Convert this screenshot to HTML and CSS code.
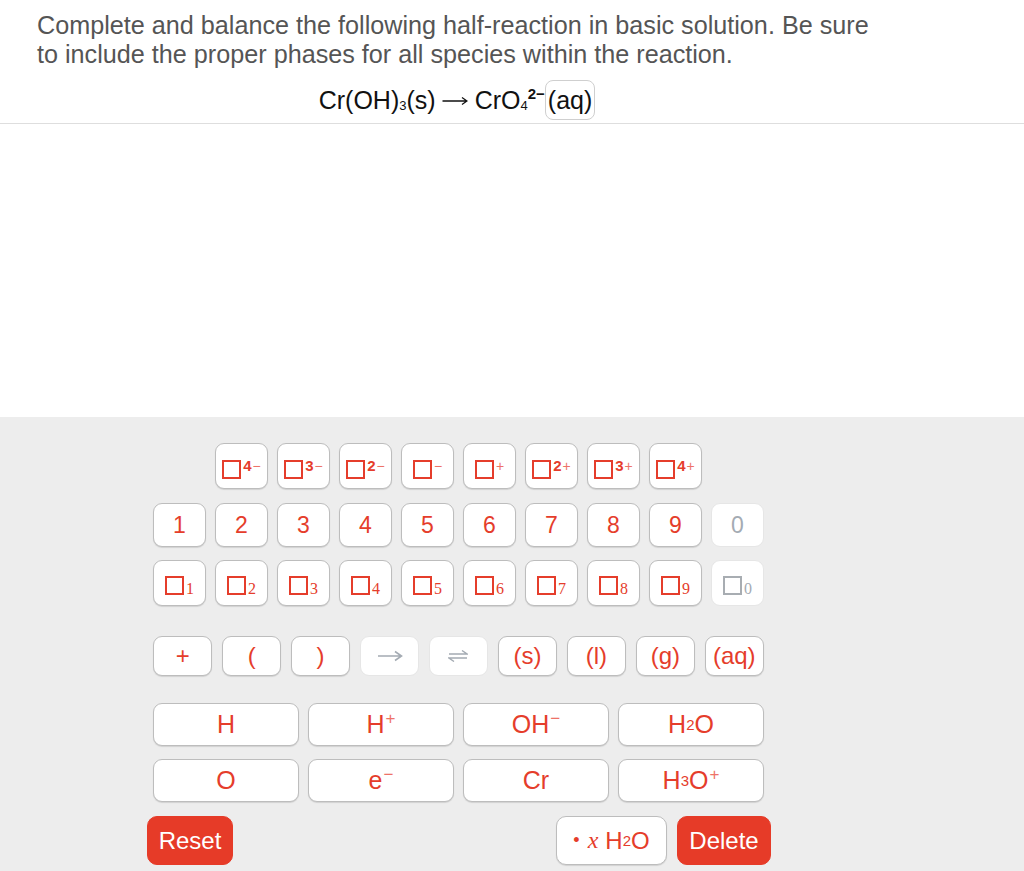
FILE: index.html
```html
<!DOCTYPE html>
<html>
<head>
<meta charset="utf-8">
<link rel="stylesheet" href="styles.css">
</head>
<body>
<div class="question">
  <p class="prompt">Complete and balance the following half-reaction in basic solution. Be sure<br>to include the proper phases for all species within the reaction.</p>
  <div class="equation">Cr(OH)<sub class="eq-sub">3</sub>(s)<svg class="eq-arrow" width="26" height="10" viewBox="0 0 26 10"><path d="M0.5 5H24.5M20 1.5L25 5L20 8.5" fill="none" stroke="#111" stroke-width="1.3"/></svg>CrO<sub class="eq-sub">4</sub><sup class="eq-sup">2−</sup><span class="answer-box">(aq)</span></div>
</div>
<div class="work-area"></div>
<div class="keypad">
  <div class="pad">
    <div class="row charges">
      <button class="key ck first"><span class="box"></span><span class="chg"><b>4</b>−</span></button>
      <button class="key ck"><span class="box"></span><span class="chg"><b>3</b>−</span></button>
      <button class="key ck"><span class="box"></span><span class="chg"><b>2</b>−</span></button>
      <button class="key ck"><span class="box"></span><span class="chg">−</span></button>
      <button class="key ck"><span class="box"></span><span class="chg">+</span></button>
      <button class="key ck"><span class="box"></span><span class="chg"><b>2</b>+</span></button>
      <button class="key ck"><span class="box"></span><span class="chg"><b>3</b>+</span></button>
      <button class="key ck"><span class="box"></span><span class="chg"><b>4</b>+</span></button>
    </div>
    <div class="row digits">
      <button class="key">1</button>
      <button class="key">2</button>
      <button class="key">3</button>
      <button class="key">4</button>
      <button class="key">5</button>
      <button class="key">6</button>
      <button class="key">7</button>
      <button class="key">8</button>
      <button class="key">9</button>
      <button class="key off">0</button>
    </div>
    <div class="row subs">
      <button class="key sk"><span class="box"></span><span class="sn">1</span></button>
      <button class="key sk"><span class="box"></span><span class="sn">2</span></button>
      <button class="key sk"><span class="box"></span><span class="sn">3</span></button>
      <button class="key sk"><span class="box"></span><span class="sn">4</span></button>
      <button class="key sk"><span class="box"></span><span class="sn">5</span></button>
      <button class="key sk"><span class="box"></span><span class="sn">6</span></button>
      <button class="key sk"><span class="box"></span><span class="sn">7</span></button>
      <button class="key sk"><span class="box"></span><span class="sn">8</span></button>
      <button class="key sk"><span class="box"></span><span class="sn">9</span></button>
      <button class="key sk off"><span class="box"></span><span class="sn">0</span></button>
    </div>
    <div class="row symbols">
      <button class="key">+</button>
      <button class="key">(</button>
      <button class="key">)</button>
      <button class="key off arrow">
        <svg width="26" height="12" viewBox="0 0 26 12"><path d="M1 6H24M18 1.5L24.5 6L18 10.5" fill="none" stroke="#a4abb3" stroke-width="1.6"/></svg>
      </button>
      <button class="key off arrow">
        <svg width="20" height="12" viewBox="0 0 20 12"><path d="M1 4H19L14 0.5M19 8H1L6 11.5" fill="none" stroke="#a4abb3" stroke-width="1.4"/></svg>
      </button>
      <button class="key">(s)</button>
      <button class="key">(l)</button>
      <button class="key">(g)</button>
      <button class="key">(aq)</button>
    </div>
    <div class="row elements">
      <button class="key">H</button>
      <button class="key">H<sup class="ion">+</sup></button>
      <button class="key">OH<sup class="ion">−</sup></button>
      <button class="key">H<sub class="ion-sub">2</sub>O</button>
    </div>
    <div class="row elements second">
      <button class="key">O</button>
      <button class="key">e<sup class="ion">−</sup></button>
      <button class="key">Cr</button>
      <button class="key">H<sub class="ion-sub">3</sub>O<sup class="ion">+</sup></button>
    </div>
    <div class="row actions">
      <button class="key solid reset">Reset</button>
      <div class="action-group">
        <button class="key water"><span class="dot">•</span><span class="xvar">x</span>H<sub class="ion-sub">2</sub>O</button>
        <button class="key solid delete">Delete</button>
      </div>
    </div>
  </div>
</div>
</body>
</html>
```

FILE: styles.css
```css
* { box-sizing: border-box; }
html, body { margin: 0; padding: 0; }
body {
  width: 1024px;
  height: 871px;
  overflow: hidden;
  background: #fff;
  font-family: "Liberation Sans", Arial, sans-serif;
}

.question {
  height: 124px;
  border-bottom: 1px solid #dedede;
}
.prompt {
  margin: 0;
  padding: 11px 0 0 37px;
  font-size: 25.2px;
  line-height: 28.5px;
  color: #555;
  white-space: nowrap;
}
.equation {
  width: 914px;
  margin-top: 12px;
  text-align: center;
  font-size: 25px;
  line-height: 40px;
  color: #111;
  white-space: nowrap;
}
.eq-arrow { display: inline-block; margin: 0 7px 0 6px; vertical-align: 3px; }
.eq-sub { font-size: 13px; line-height: 0; vertical-align: -1px; }
.eq-sup { font-size: 15px; line-height: 0; vertical-align: 10px; font-weight: bold; }
.answer-box {
  display: inline-block;
  height: 40px;
  line-height: 38px;
  padding: 0 2px;
  border: 1px solid #cfcfcf;
  border-radius: 8px;
  vertical-align: top;
}

.work-area { height: 293px; }

.keypad {
  height: 454px;
  background: #ededed;
  padding-top: 26px;
}
.pad {
  margin-left: 153px;
  width: 611px;
}
.row {
  display: grid;
  column-gap: 9px;
}
.key {
  margin: 0;
  padding: 0;
  background: #fff;
  border: 1px solid #bdbdbd;
  border-radius: 9px;
  box-shadow: 0 1px 1px rgba(0,0,0,0.12);
  color: #e53d2b;
  font-family: "Liberation Sans", Arial, sans-serif;
  display: flex;
  align-items: center;
  justify-content: center;
  cursor: pointer;
}
.key.off {
  color: #a4abb3;
  border-color: #e6e6e6;
  box-shadow: none;
}

.charges {
  grid-template-columns: repeat(10, 1fr);
  height: 46px;
  margin-bottom: 14px;
}
.charges .first { grid-column: 2; }
.box {
  display: inline-block;
  width: 19px;
  height: 19px;
  border: 2px solid #e53d2b;
}
.key.off .box { border-color: #a8adb2; }
.ck { padding-top: 6px; }
.chg {
  align-self: flex-start;
  margin-top: 10px;
  margin-left: 2px;
  font-size: 14px;
  line-height: 12px;
  color: #ee7268;
}
.chg b { color: #e53d2b; margin-right: 1px; font-size: 15px; }

.digits {
  grid-template-columns: repeat(10, 1fr);
  height: 44px;
  margin-bottom: 13px;
}
.digits .key { font-size: 23px; }

.subs {
  grid-template-columns: repeat(10, 1fr);
  height: 46px;
  margin-bottom: 30px;
}
.sk { align-items: flex-end; padding-bottom: 10px; }
.sn {
  font-family: "Liberation Serif", "Times New Roman", serif;
  font-size: 16px;
  line-height: 12px;
  margin-left: 2px;
}

.symbols {
  grid-template-columns: repeat(9, 1fr);
  column-gap: 9.5px;
  height: 40px;
  margin-bottom: 27px;
}
.symbols .key { font-size: 24px; }
.symbols .arrow svg { display: block; }

.elements {
  grid-template-columns: repeat(4, 1fr);
  height: 43px;
  margin-bottom: 13px;
}
.elements.second { margin-bottom: 14px; }
.elements .key { font-size: 25px; }
.ion {
  font-size: 17px;
  line-height: 14px;
  align-self: flex-start;
  margin-top: 8px;
  margin-left: 1px;
  color: #ee7268;
  font-weight: normal;
}
.ion-sub { font-size: 15px; line-height: 0; vertical-align: -3px; }

.actions {
  display: flex;
  justify-content: space-between;
  margin-left: -6px;
  width: 624px;
  height: 49px;
}
.action-group { display: flex; gap: 10px; }
.actions .key { font-size: 24px; border-radius: 10px; }
.solid {
  background: #e63b28;
  border-color: #e63b28;
  color: #fff;
  box-shadow: none;
}
.reset { width: 86px; }
.delete { width: 94px; }
.water { width: 111px; }
.dot { font-size: 18px; margin-right: 8px; }
.xvar {
  font-family: "Liberation Serif", "Times New Roman", serif;
  font-style: italic;
  margin-right: 7px;
}
```
